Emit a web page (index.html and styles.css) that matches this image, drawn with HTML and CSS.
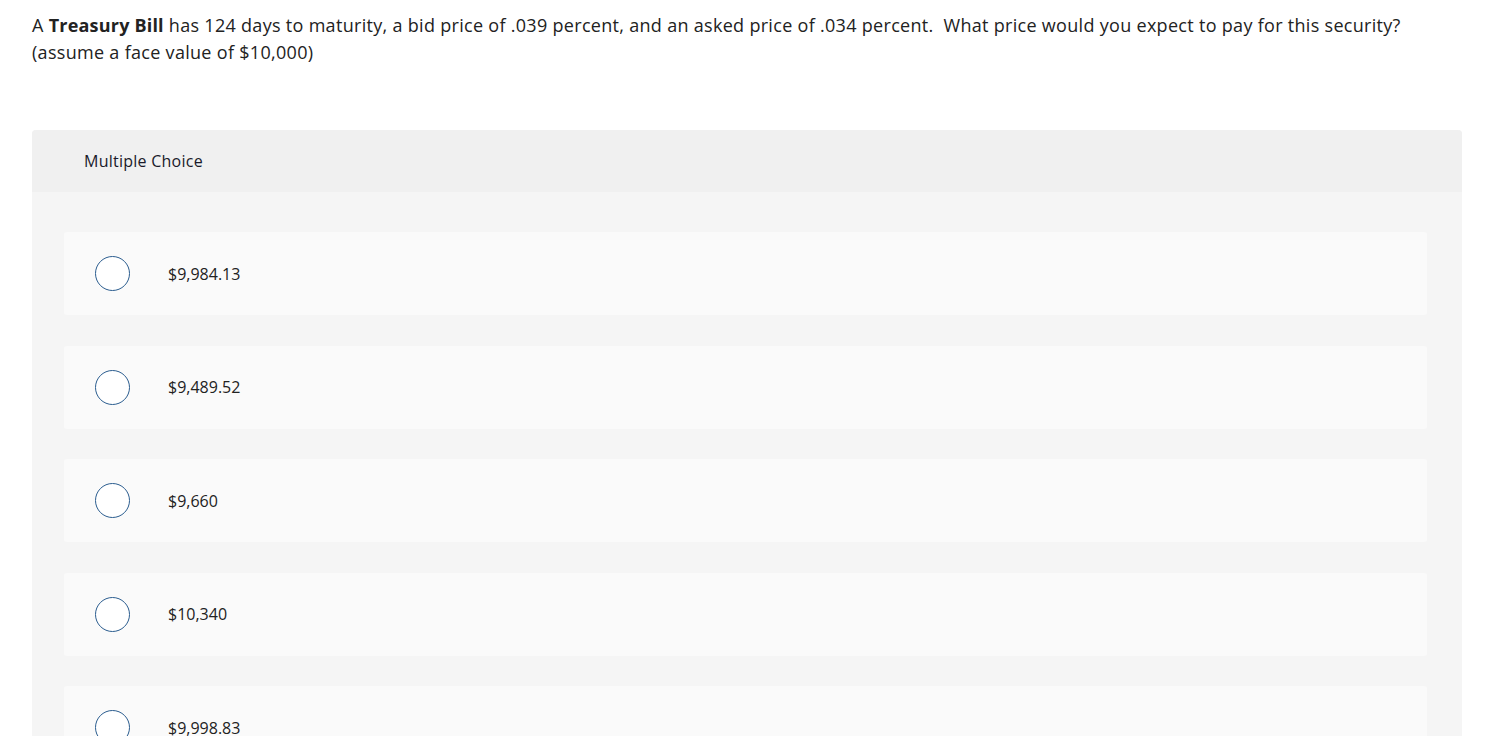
FILE: index.html
```html
<!DOCTYPE html>
<html>
<head>
<meta charset="utf-8">
<link rel="stylesheet" href="styles.css">
</head>
<body>
<div class="page">
  <p class="question">A <b>Treasury Bill</b> has 124 days to maturity, a bid price of .039 percent, and an asked price of .034 percent.&nbsp; What price would you expect to pay for this security?<br>(assume a face value of $10,000)</p>
  <section class="panel">
    <div class="panel-head">Multiple Choice</div>
    <div class="panel-body">
      <div class="option"><span class="radio"></span><span class="label">$9,984.13</span></div>
      <div class="option"><span class="radio"></span><span class="label">$9,489.52</span></div>
      <div class="option"><span class="radio"></span><span class="label">$9,660</span></div>
      <div class="option"><span class="radio"></span><span class="label">$10,340</span></div>
      <div class="option"><span class="radio"></span><span class="label">$9,998.83</span></div>
    </div>
  </section>
</div>
</body>
</html>
```
FILE: styles.css
```css
html, body {
  margin: 0;
  padding: 0;
  background: #fff;
}
body {
  font-family: "Open Sans", "Liberation Sans", sans-serif;
  color: #1f1f1f;
}
.page {
  padding: 12px 40px 0 32px;
  height: 724px;
  overflow: hidden;
}
.question {
  margin: 0;
  font-size: 18px;
  line-height: 27px;
  letter-spacing: 0.3px;
  color: #222;
}
.question b {
  font-weight: 700;
  letter-spacing: 0.2px;
}
.panel {
  margin-top: 64px;
  border-radius: 4px;
  overflow: hidden;
  background: #f5f5f5;
}
.panel-head {
  background: #f0f0f0;
  height: 62px;
  display: flex;
  align-items: center;
  padding-left: 52px;
  font-size: 16px;
  letter-spacing: 0.25px;
  color: #1a1a2a;
}
.panel-body {
  padding: 40px 35px 40px 32px;
  display: flex;
  flex-direction: column;
  gap: 30.5px;
}
.option {
  background: #fafafa;
  border-radius: 3px;
  height: 83px;
  display: flex;
  align-items: center;
  padding-left: 31px;
}
.radio {
  width: 33px;
  height: 33px;
  border: 1.6px solid #2b5d8f;
  border-radius: 50%;
  background: #fff;
  flex: none;
}
.label {
  margin-left: 38px;
  font-size: 16px;
  color: #222;
}
```
